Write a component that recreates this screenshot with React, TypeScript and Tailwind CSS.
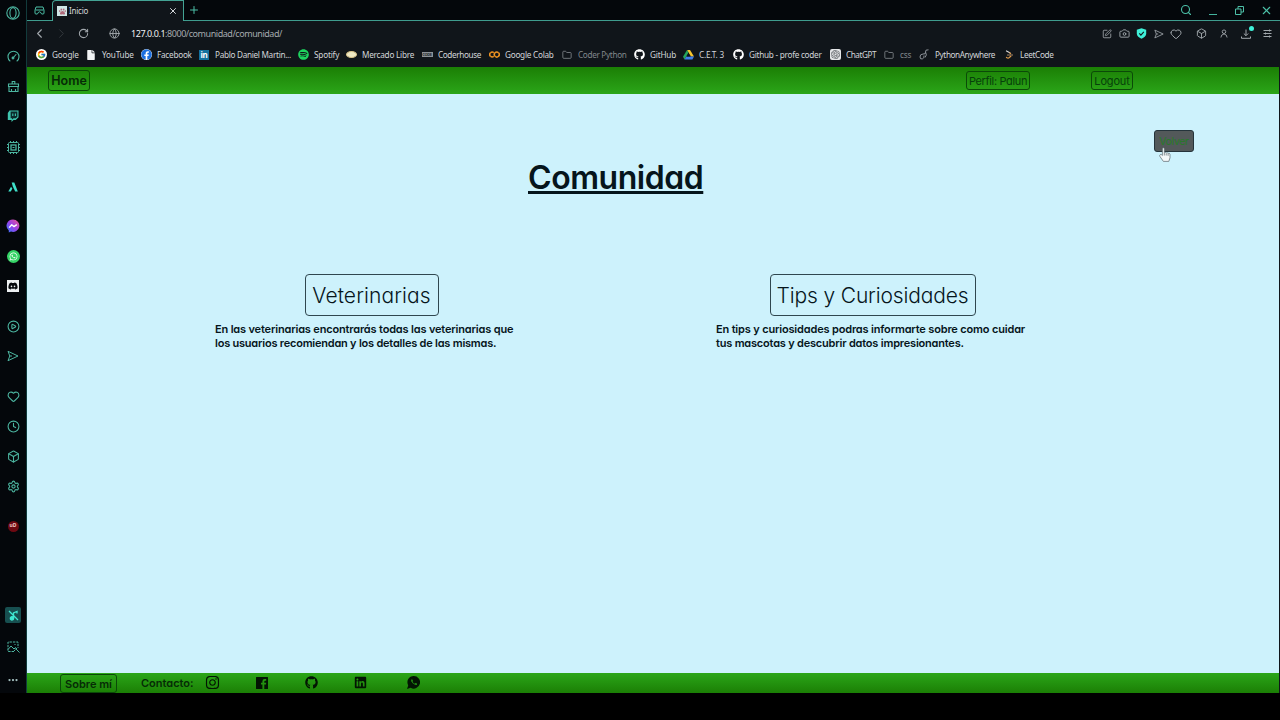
import type { ReactNode } from 'react'
import {
  Box, Camera, ChevronLeft, ChevronRight, CirclePlay, Clock, Ellipsis,
  Folder, Globe, Heart, Plus, RotateCw, Search, Settings, SquarePen, X,
} from 'lucide-react'
import {
  FaDiscord, FaFacebook, FaFile, FaGithub, FaInstagram,
  FaLinkedin, FaPaw, FaSpotify, FaWhatsapp,
} from 'react-icons/fa'
import { FcGoogle } from 'react-icons/fc'
import { SiGooglecolab, SiOpenai } from 'react-icons/si'

interface Item {
  icon: ReactNode
  slot: string
}

interface Bookmark {
  icon: ReactNode
  label: string
  slot: string
  muted?: boolean
}

const line = { size: 13, strokeWidth: 2 }

function OperaLogo() {
  return (
    <svg width="14" height="14" viewBox="0 0 14 14" fill="none" stroke="currentColor" strokeWidth="1.1">
      <circle cx="7" cy="7" r="6.2" />
      <ellipse cx="7" cy="7" rx="3.1" ry="5.4" />
    </svg>
  )
}

function SpeedDial() {
  return (
    <svg width="13" height="13" viewBox="0 0 13 13" fill="none" stroke="currentColor" strokeWidth="1.1" strokeLinecap="round">
      <path d="M3 11A5.5 5.5 0 1 1 10 11M6 8l3-3.5" />
      <circle cx="6" cy="8" r=".9" />
    </svg>
  )
}

function Twitch() {
  return (
    <svg width="12" height="12" viewBox="0 0 12 12">
      <path d="M2.5.5h9v6.8L8.8 10H6.5L4.5 12V10H.8V3Z" fill="#3fc4ae" />
      <path d="M3.6 1.6h6.8v5.2L8.8 8.3H6.6L5 9.5V8.3H3.6Z" fill="#0b2a2b" />
      <path d="M5.8 3.4v2.6M8.4 3.4v2.6" stroke="#3fc4ae" strokeWidth="1.1" />
    </svg>
  )
}

function Chip() {
  return (
    <svg width="13" height="13" viewBox="0 0 13 13" fill="none" stroke="currentColor">
      <rect x="1.5" y="1.5" width="10" height="10" rx="1" />
      <rect x="4" y="4" width="5" height="5" strokeWidth="1.3" />
      <path d="M3.5 0v1.5M6.5 0v1.5M9.5 0v1.5M3.5 11.5V13M6.5 11.5V13M9.5 11.5V13M0 3.5h1.5M0 6.5h1.5M0 9.5h1.5M11.5 3.5H13M11.5 6.5H13M11.5 9.5H13M5.5 6.5h2" />
    </svg>
  )
}

function Messenger() {
  return (
    <svg width="14" height="14" viewBox="0 0 14 14">
      <defs>
        <linearGradient id="messenger" x1="0" y1="1" x2="1" y2="0">
          <stop offset="0" stopColor="#2f7bff" />
          <stop offset=".5" stopColor="#9a3fe8" />
          <stop offset="1" stopColor="#f0568c" />
        </linearGradient>
      </defs>
      <path d="M7 .5a6.4 6.2 0 1 1-2 12.1L2.8 13.6V11.4A6.4 6.2 0 0 1 7 .5Z" fill="url(#messenger)" />
      <path d="m3.2 8.6 2.5-2.8 2.3 1.8 2.8-2" fill="none" stroke="#fff" strokeWidth="1.4" strokeLinejoin="round" />
    </svg>
  )
}

function PaperPlane({ size = 12 }: { size?: number }) {
  return (
    <svg width={size} height={size} viewBox="0 0 12 12" fill="none" stroke="currentColor" strokeLinejoin="round">
      <path d="M1 1.3 11 6 1 10.7 2.8 6ZM2.8 6H5" />
    </svg>
  )
}

function Cleaner() {
  return (
    <svg width="13" height="13" viewBox="0 0 13 13" fill="none" stroke="currentColor" strokeWidth="1.1">
      <path d="M5.2 4V1.5h2.6V4M1.5 4h10v2.5h-10ZM2 6.5v5h9v-5M4.5 9v2.5M8.5 9v2.5" />
    </svg>
  )
}

function Wallpaper() {
  return (
    <svg width="13" height="12" viewBox="0 0 13 12" fill="none" stroke="currentColor">
      <path d="M7 10.5H1V1h10v6" strokeDasharray="2.4 1" />
      <path d="m1 8.5 3-3.5 3 3 1.5-1.5L10 8M6.5 10.5l2-2M8.5 7.5l4 4M7.5 3.5h1" />
    </svg>
  )
}

function Gamepad() {
  return (
    <svg width="11" height="9" viewBox="0 0 11 9" fill="none" stroke="currentColor" strokeLinejoin="round">
      <path d="M2 1h7l1 3.2V7Q10 8 9 8H8Q7.3 8 7 7 6.5 5.8 5.5 5.8T4 7Q3.7 8 3 8H2Q1 8 1 7V4.2ZM1.5 4h8" />
    </svg>
  )
}

function Shield() {
  return (
    <svg width="11" height="11" viewBox="0 0 11 11" fill="#3ff0d8">
      <path d="M5.5.3 10.2 1.8V6Q9.6 9 5.5 10.8 1.4 9 .8 6V1.8Z" />
      <path d="m3.3 5.4 1.6 1.7 2.9-3.2" fill="none" stroke="#10151a" strokeWidth="1.1" />
    </svg>
  )
}

function Person() {
  return (
    <svg width="8" height="9" viewBox="0 0 9 10" fill="none" stroke="currentColor">
      <circle cx="4.5" cy="3" r="2" />
      <path d="M1 9.5Q1.2 6 4.5 5.5 7.8 6 8 9.5" />
    </svg>
  )
}

function Downloads() {
  return (
    <svg width="10" height="10" viewBox="0 0 10 10" fill="none" stroke="currentColor">
      <path d="M5 .5v6M2.8 4.5 5 6.7l2.2-2.2M.5 7.5v1.8h9V7.5" />
    </svg>
  )
}

function Menu() {
  return (
    <svg width="9" height="9" viewBox="0 0 9 9" fill="none" stroke="currentColor">
      <path d="M.5 1.5h8M.5 4.5h8M.5 7.5h8M6.5.5v2M2.5 3.5v2M6.5 6.5v2" />
    </svg>
  )
}

function Snake() {
  return (
    <svg width="10" height="11" viewBox="0 0 10 11" fill="none" stroke="#8c9299" strokeWidth="1">
      <path d="M9.5.8Q6 .5 6.5 3T4 5Q.8 5.2 1 8t2.5 1.8Q5.5 9 5 6.5M6.5 3Q8.5 6 6 8.5" />
    </svg>
  )
}

function LeetCode() {
  return (
    <svg width="8" height="9" viewBox="0 0 8 9" fill="none" strokeWidth="1.2" strokeLinecap="round">
      <path d="M1.5 1 4.8 2.8" stroke="#d8dadc" />
      <path d="M4.8 2.8 5.6 3.6M5.8 6.2 4 7.8Q3 8.4 1.5 7.4" stroke="#e09a4a" />
      <path d="M2.5 5h5" stroke="#a98a68" />
    </svg>
  )
}

function Pointer() {
  return (
    <svg width="12" height="15" viewBox="0 0 12 15" fill="#f4f8f9" stroke="#59666b" strokeWidth=".7" strokeLinejoin="round">
      <path d="M3.4 8.5V1.8Q3.4.7 4.3.7t1 1.1v4q1-.9 1.9.2 1-.7 1.8.3 1.8-.6 2 1.2v3.3l-1.2 3.6H4.4L1 9.6Q.2 8.2 1.4 7.5 2.4 7.2 3.4 8.5Z" />
      <path d="M5.3 6v2.5M7.2 6.5v2M9.1 6.8v2" />
    </svg>
  )
}

const sidebar: Item[] = [
  { icon: <OperaLogo />, slot: 'mt-[6px]' },
  { icon: <SpeedDial />, slot: 'mt-[29px]' },
  { icon: <Cleaner />, slot: 'mt-[16px]' },
  { icon: <Twitch />, slot: 'mt-[16px]' },
  { icon: <Chip />, slot: 'mt-[17px]' },
  {
    icon: (
      <svg width="10" height="10" viewBox="0 0 10 10" fill="#3fe0ca">
        <path d="M3.7.4h2.6L9.8 9.6H7.2L4.8 4.5Z" />
        <path d="M3 4.8 4.4 6.4 2.8 9.6H.3Z" />
      </svg>
    ),
    slot: 'mt-[26px]',
  },
  { icon: <Messenger />, slot: 'mt-[25px]' },
  {
    icon: (
      <span className="flex size-[13px] items-center justify-center rounded-full bg-[#35d366] text-white">
        <FaWhatsapp size={9} />
      </span>
    ),
    slot: 'mt-[16px]',
  },
  {
    icon: (
      <span className="flex size-[12px] items-center justify-center bg-[#eceff1] text-[#05080c]">
        <FaDiscord size={10} />
      </span>
    ),
    slot: 'mt-[16px]',
  },
  { icon: <CirclePlay {...line} />, slot: 'mt-[26px]' },
  { icon: <PaperPlane />, slot: 'mt-[16px]' },
  { icon: <Heart {...line} />, slot: 'mt-[26px]' },
  { icon: <Clock {...line} />, slot: 'mt-[16px]' },
  { icon: <Box {...line} />, slot: 'mt-[16px]' },
  { icon: <Settings {...line} />, slot: 'mt-[16px]' },
  {
    icon: (
      <span className="flex size-[11px] items-center justify-center rounded-full bg-[#6d0912] text-[5px] font-bold text-[#f0c8c8]">
        uD
      </span>
    ),
    slot: 'mt-[26px]',
  },
  {
    icon: (
      <span className="flex size-4 shrink-0 items-center justify-center rounded-xs bg-[#174f50] text-[#3fe8d2]">
        <svg width="11" height="11" viewBox="0 0 11 11" fill="none" stroke="currentColor" strokeWidth="1.3">
          <path d="M1 1l9 9M5.5 8V3L9 1.5v2" />
          <circle cx="4" cy="8.3" r="1.7" fill="currentColor" />
        </svg>
      </span>
    ),
    slot: 'mt-[75px]',
  },
  { icon: <Wallpaper />, slot: 'mt-[18px]' },
  { icon: <Ellipsis size={12} strokeWidth={2.5} className="text-[#a8c4c4]" />, slot: 'mt-[19px]' },
]

const bookmarks: Bookmark[] = [
  {
    icon: (
      <span className="flex size-[11px] items-center justify-center rounded-full bg-white">
        <FcGoogle size={9} />
      </span>
    ),
    label: 'Google',
    slot: 'w-[50px] tracking-[-0.15px]',
  },
  { icon: <FaFile size={10} className="text-[#f2f4f5]" />, label: 'YouTube', slot: 'w-[55px] tracking-[-0.2px]' },
  { icon: <FaFacebook size={11} className="rounded-full bg-white text-[#1b6fe0]" />, label: 'Facebook', slot: 'w-[58px] tracking-[-0.25px]' },
  {
    icon: (
      <span className="flex size-[10px] items-center justify-center bg-[#13719f] text-[8px] leading-none font-bold text-white">in</span>
    ),
    label: 'Pablo Daniel Martin...',
    slot: 'w-[99px] tracking-[-0.3px]',
  },
  { icon: <FaSpotify size={11} className="text-[#1ed45f]" />, label: 'Spotify', slot: 'w-[48px] tracking-[-0.2px]' },
  {
    icon: <span className="h-[7px] w-[11px] rounded-[50%] border border-[#d8c489] bg-[#efe9c4]" />,
    label: 'Mercado Libre',
    slot: 'w-[76px] tracking-[-0.24px]',
  },
  {
    icon: <span className="flex h-[5px] w-[11px] items-center justify-center bg-[#8c9297] text-[4px] font-bold text-[#22262b]">CODE</span>,
    label: 'Coderhouse',
    slot: 'w-[67px] tracking-[-0.38px]',
  },
  { icon: <SiGooglecolab size={11} className="text-[#ee9321]" />, label: 'Google Colab', slot: 'w-[73px] tracking-[-0.25px]' },
  { icon: <Folder size={10} strokeWidth={2} />, label: 'Coder Python', slot: 'w-[72px] tracking-[-0.33px]', muted: true },
  { icon: <FaGithub size={11} className="text-white" />, label: 'GitHub', slot: 'w-[49px] tracking-[-0.2px]' },
  {
    icon: (
      <svg width="11" height="10" viewBox="0 0 11 10">
        <path d="M4 0h3l4 6.6H8Z" fill="#f7c52d" />
        <path d="M4 0 5.5 2.5 1.5 9.5 0 6.7Z" fill="#25a35b" />
        <path d="M3.2 6.6H11L9.4 9.6H1.5Z" fill="#3e7de9" />
        <path d="M5.5 3.2 7.4 6.6H3.6Z" fill="#10151a" />
      </svg>
    ),
    label: 'C.E.T. 3',
    slot: 'w-[50px] tracking-[-0.2px]',
  },
  { icon: <FaGithub size={11} className="text-white" />, label: 'Github - profe coder', slot: 'w-[97px] tracking-[-0.26px]' },
  {
    icon: (
      <span className="flex size-[11px] items-center justify-center rounded-xs bg-[#e4e6e8] text-[#50555a]">
        <SiOpenai size={9} />
      </span>
    ),
    label: 'ChatGPT',
    slot: 'w-[54px] tracking-[-0.45px]',
  },
  { icon: <Folder size={10} strokeWidth={2} />, label: 'css', slot: 'w-[35px] tracking-[-0.2px]', muted: true },
  { icon: <Snake />, label: 'PythonAnywhere', slot: 'w-[85px] tracking-[-0.4px]' },
  { icon: <LeetCode />, label: 'LeetCode', slot: 'w-[60px] tracking-[-0.35px]' },
]

function Sidebar() {
  return (
    <aside className="flex w-[27px] shrink-0 flex-col items-center border-r border-[#123b3c] bg-[#04070b] text-[#4cb5a0]">
      {sidebar.map(({ icon, slot }, i) => (
        <div key={i} className={`flex h-[14px] w-full shrink-0 items-center justify-center ${slot}`}>
          {icon}
        </div>
      ))}
    </aside>
  )
}

function TabStrip() {
  return (
    <div className="flex h-[21px] shrink-0 bg-[#04070b] text-[#4cc0a8]">
      <div className="flex w-[25px] items-center justify-center border-b border-[#3f9c8e]">
        <Gamepad />
      </div>
      <div className="flex w-[132px] items-center rounded-tl-sm border-x border-t border-[#43a394] bg-[#10151a] pr-[5px] pl-[4px] text-[8px] tracking-[-0.2px] text-[#d5d9dc]">
        <span className="mr-[2px] flex size-[10px] items-center justify-center bg-[#cfe6e6] text-[#b0697a]">
          <FaPaw size={7} />
        </span>
        Inicio
        <X size={10} strokeWidth={2.4} className="ml-auto" />
      </div>
      <div className="flex flex-1 items-center border-b border-[#3f9c8e] pl-[4px]">
        <Plus size={12} strokeWidth={2} />
        <div className="ml-auto flex items-center">
          <Search size={12} strokeWidth={2.2} />
          <span className="mt-[8px] ml-[17px] h-px w-[8px] bg-[#43b39d]" />
          <svg width="9" height="9" viewBox="0 0 9 9" fill="none" stroke="currentColor" className="ml-[18px]">
            <path d="M.5 3h5.5v5.5H.5ZM3 3V.5h5.5V6H6" />
          </svg>
          <X size={13} strokeWidth={2} className="mr-[7px] ml-[16px]" />
        </div>
      </div>
    </div>
  )
}

function AddressBar() {
  return (
    <div className="flex h-[26px] shrink-0 items-center pb-px text-[#a2a8ad]">
      <ChevronLeft size={15} strokeWidth={1.8} className="ml-[5px]" />
      <ChevronRight size={15} strokeWidth={1.6} className="ml-[7px] text-[#33383d]" />
      <RotateCw size={11} strokeWidth={2.2} className="ml-[9px]" />
      <Globe size={11} strokeWidth={2} className="ml-[20px]" />
      <span className="ml-[11px] text-[9px] tracking-[-0.45px] text-[#a5aaae]">
        <span className="text-[#eef0f1]">127.0.0.1</span>:8000/comunidad/comunidad/
      </span>
      <div className="mr-[8px] ml-auto flex items-center">
        <SquarePen size={10} />
        <Camera size={11} className="ml-[7px]" />
        <span className="ml-[6px]"><Shield /></span>
        <span className="ml-[7px]"><PaperPlane size={10} /></span>
        <Heart size={12} className="ml-[6px]" />
        <Box size={11} className="ml-[14px]" />
        <span className="ml-[13px]"><Person /></span>
        <span className="relative ml-[13px]">
          <Downloads />
          <span className="absolute -top-[3px] -right-[3px] size-[5px] rounded-full bg-[#3ff0d8]" />
        </span>
        <span className="ml-[12px]"><Menu /></span>
      </div>
    </div>
  )
}

function BookmarksBar() {
  return (
    <div className="flex h-[20px] shrink-0 items-center pb-[4px] pl-[8px]">
      {bookmarks.map(({ icon, label, slot, muted }, i) => (
        <div
          key={i}
          className={`flex shrink-0 items-center gap-[5px] text-[8.2px] whitespace-nowrap ${slot} ${muted ? 'text-[#81878c]' : 'text-[#d3d6d9]'}`}
        >
          <span className="flex w-[12px] shrink-0 items-center justify-center">{icon}</span>
          {label}
        </div>
      ))}
    </div>
  )
}

function Navbar() {
  return (
    <nav className="flex h-[27px] shrink-0 items-center bg-linear-to-b from-[#1b7f05] to-[#2ba618] pl-[21px] text-[11px] text-[#06400a]">
      <a className="flex h-[21px] w-[42px] items-center justify-center rounded-[3px] border border-[#0b4a08] pt-[2px] text-[12.5px] font-semibold text-[#062b06]">
        Home
      </a>
      <a className="ml-[876px] flex h-[19px] w-[64px] items-center justify-center rounded-[3px] border border-[#0b4a08] pt-px tracking-[-0.35px] whitespace-nowrap">
        Perfil: Palun
      </a>
      <a className="ml-[61px] flex h-[19px] w-[42px] items-center justify-center rounded-[3px] border border-[#0b4a08] pt-px tracking-[-0.15px]">
        Logout
      </a>
    </nav>
  )
}

function Community() {
  return (
    <main className="flex flex-1 flex-col bg-[#cdf2fc] pt-[36px] text-[#06151b]">
      <div className="flex h-[22px] justify-end pr-[85px]">
        <button className="relative flex h-[22px] w-[40px] items-center justify-center rounded-[3px] border border-[#25343b] bg-[#53595a] pt-px text-[10.5px] tracking-[-0.3px] text-[#267a28]">
          Volver
          <span className="absolute top-[16px] left-[4px]"><Pointer /></span>
        </button>
      </div>
      <h1 className="mt-[6px] ml-[501px] w-fit text-[32px] leading-[40px] font-semibold tracking-[-0.45px] underline decoration-[3px] underline-offset-[2px]">
        Comunidad
      </h1>
      <div className="mt-[76px] flex">
        <section className="ml-[188px] w-[313px]">
          <a className="mx-auto flex h-[42px] w-[134px] items-center justify-center rounded-[4px] border border-[#2f474f] pt-[2px] text-[21px] font-light tracking-[0.1px]">
            Veterinarias
          </a>
          <p className="mt-[6px] text-[11px] leading-[14px] font-semibold tracking-[-0.17px] whitespace-nowrap">
            En las veterinarias encontrarás todas las veterinarias que
            <br />
            <span className="tracking-[-0.22px]">los usuarios recomiendan y los detalles de las mismas.</span>
          </p>
        </section>
        <section className="ml-[188px] w-[313px]">
          <a className="mx-auto flex h-[42px] w-[206px] items-center justify-center rounded-[4px] border border-[#2f474f] pt-[2px] text-[21px] font-light tracking-[-0.15px]">
            Tips y Curiosidades
          </a>
          <p className="mt-[6px] text-[11px] leading-[14px] font-semibold tracking-[-0.17px] whitespace-nowrap">
            En tips y curiosidades podras informarte sobre como cuidar
            <br />
            <span className="tracking-[-0.2px]">tus mascotas y descubrir datos impresionantes.</span>
          </p>
        </section>
      </div>
    </main>
  )
}

function SiteFooter() {
  return (
    <footer className="flex h-[20px] shrink-0 items-center bg-linear-to-b from-[#2ba618] to-[#1b7f05] pl-[33px] text-[11px] font-semibold text-[#062b06]">
      <a className="mt-px flex h-[19px] w-[57px] items-center justify-center rounded-[3px] border border-[#0b4a08] pt-px whitespace-nowrap">
        Sobre mí
      </a>
      <span className="ml-[24px] w-[64px]">Contacto:</span>
      <div className="flex items-center pb-px text-[#031503]">
        <FaInstagram size={15} />
        <svg width="12" height="12" viewBox="0 0 12 12" fill="currentColor" className="ml-[36px]">
          <path d="M.5 0h11q.5 0 .5.5v11q0 .5-.5.5H8.3V7.6H10l.2-1.9H8.3V4.6q0-.9.9-.9h1V2H8.8Q6.4 2 6.4 4.3v1.4H5v1.9h1.4V12H.5Q0 12 0 11.5V.5Q0 0 .5 0Z" />
        </svg>
        <FaGithub size={13} className="ml-[37px]" />
        <FaLinkedin size={13} className="ml-[36px]" />
        <svg width="13" height="13" viewBox="0 0 13 13" className="ml-[40px]">
          <path d="M6.7 0a6.3 6.3 0 1 1-3 11.8L0 13l1.2-3.6A6.3 6.3 0 0 1 6.7 0Z" fill="currentColor" />
          <path d="M4.2 3.5Q3.4 5 5.8 7.3T9.8 9L10 7.6 8.5 7l-.8.7Q6.4 7.3 5.5 5.8L6 5l-.6-1.6Z" fill="#249314" />
        </svg>
      </div>
    </footer>
  )
}

export default function App() {
  return (
    <div className="flex h-[720px] w-[1280px] flex-col overflow-hidden bg-black pb-[27px] font-['Noto_Sans',sans-serif]">
      <div className="flex min-h-0 flex-1">
        <Sidebar />
        <div className="flex w-[1253px] flex-col bg-[#10151a]">
          <TabStrip />
          <AddressBar />
          <BookmarksBar />
          <div className="flex flex-1 flex-col border-r border-[#10151a] font-['Inter',sans-serif] [font-feature-settings:'cv11']">
            <Navbar />
            <Community />
            <SiteFooter />
          </div>
        </div>
      </div>
    </div>
  )
}
